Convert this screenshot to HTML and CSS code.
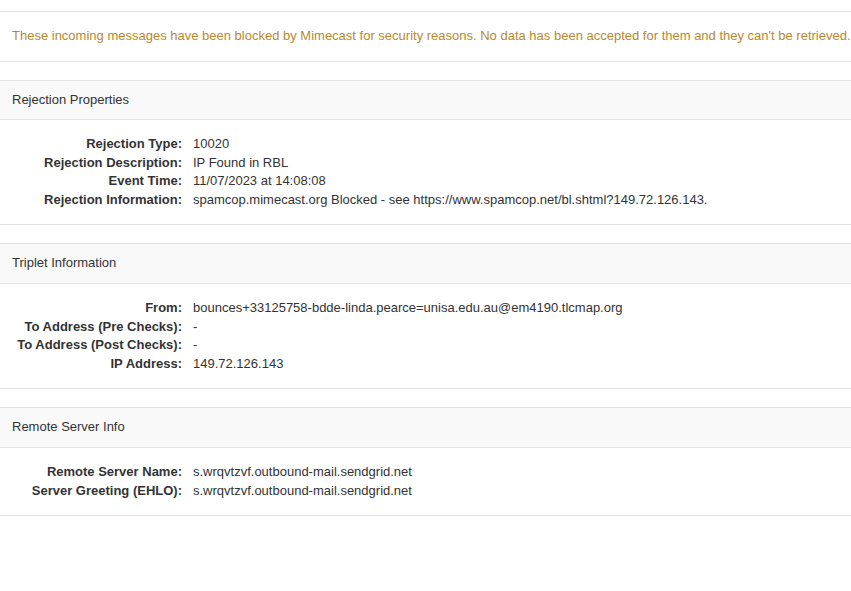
FILE: index.html
```html
<!DOCTYPE html>
<html lang="en">
<head>
    <meta charset="UTF-8">
    <title>Rejection Details</title>
    <link rel="stylesheet" href="styles.css">
</head>
<body>
    <div class="notice">
        These incoming messages have been blocked by Mimecast for security reasons. No data has been accepted for them and they can't be retrieved.
    </div>

    <div class="panel">
        <div class="panel-heading">Rejection Properties</div>
        <div class="panel-body">
            <div class="prop-list">
                <span class="prop-label">Rejection Type:</span><span>10020</span>
                <span class="prop-label">Rejection Description:</span><span>IP Found in RBL</span>
                <span class="prop-label">Event Time:</span><span>11/07/2023 at 14:08:08</span>
                <span class="prop-label">Rejection Information:</span><span>spamcop.mimecast.org Blocked - see https://www.spamcop.net/bl.shtml?149.72.126.143.</span>
            </div>
        </div>
    </div>

    <div class="panel">
        <div class="panel-heading">Triplet Information</div>
        <div class="panel-body">
            <div class="prop-list">
                <span class="prop-label">From:</span><span>bounces+33125758-bdde-linda.pearce=unisa.edu.au@em4190.tlcmap.org</span>
                <span class="prop-label">To Address (Pre Checks):</span><span>-</span>
                <span class="prop-label">To Address (Post Checks):</span><span>-</span>
                <span class="prop-label">IP Address:</span><span>149.72.126.143</span>
            </div>
        </div>
    </div>

    <div class="panel">
        <div class="panel-heading">Remote Server Info</div>
        <div class="panel-body">
            <div class="prop-list">
                <span class="prop-label">Remote Server Name:</span><span>s.wrqvtzvf.outbound-mail.sendgrid.net</span>
                <span class="prop-label">Server Greeting (EHLO):</span><span>s.wrqvtzvf.outbound-mail.sendgrid.net</span>
            </div>
        </div>
    </div>
</body>
</html>
```

FILE: styles.css
```css
body {
    font-family: "Liberation Sans", Arial, Helvetica, sans-serif;
    font-size: 13px;
    line-height: 1.43;
    color: #333;
    background-color: #fff;
    margin: 0;
    padding-top: 11px;
}
.notice {
    border-top: 1px solid #e3e3e3;
    border-bottom: 1px solid #e3e3e3;
    padding: 15px 12px;
    color: #b8892e;
    white-space: nowrap;
}
.panel {
    margin-top: 18px;
    border-top: 1px solid #e3e3e3;
    border-bottom: 1px solid #e3e3e3;
}
.panel-heading {
    background-color: #f9f9f9;
    border-bottom: 1px solid #e3e3e3;
    padding: 10px 12px;
}
.panel-body {
    padding: 15px 12px;
}
.prop-list {
    display: grid;
    grid-template-columns: 170px 1fr;
    column-gap: 11px;
}
.prop-label {
    font-weight: bold;
    text-align: right;
}
```
